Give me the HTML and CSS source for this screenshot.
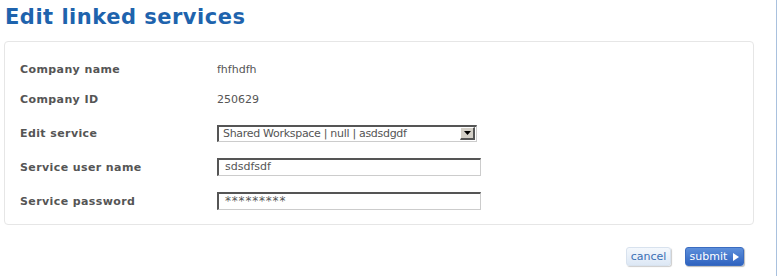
FILE: index.html
```html
<!DOCTYPE html>
<html>
<head>
<meta charset="utf-8">
<link rel="stylesheet" href="styles.css">
</head>
<body>
<div class="page">
  <h1 class="title">Edit linked services</h1>
  <div class="panel">
    <div class="row r1"><div class="label">Company name</div><div class="value">fhfhdfh</div></div>
    <div class="row r2"><div class="label">Company ID</div><div class="value">250629</div></div>
    <div class="row r3"><div class="label">Edit service</div>
      <div class="select"><span class="seltext">Shared Workspace | null | asdsdgdf</span><span class="selbtn"><svg width="7" height="4" viewBox="0 0 7 4"><path d="M0 0H7L3.5 4Z" fill="#000"/></svg></span></div>
    </div>
    <div class="row r4"><div class="label">Service user name</div><div class="input">sdsdfsdf</div></div>
    <div class="row r5"><div class="label">Service password</div><div class="input pw">*********</div></div>
  </div>
  <div class="actions">
    <span class="btn cancel">cancel</span>
    <span class="btn submit">submit <svg width="6" height="8" viewBox="0 0 6 8"><path d="M0 0L6 4L0 8Z" fill="#fff"/></svg></span>
  </div>
</div>
<div class="vline"></div>
</body>
</html>
```
FILE: styles.css
```css
html, body { margin: 0; padding: 0; background: #fff; }
body { font-family: "DejaVu Sans", Verdana, sans-serif; width: 778px; height: 276px; overflow: hidden; position: relative; }
.page { width: 776px; padding-left: 4px; box-sizing: border-box; }
.title { margin: 0; padding: 3px 0 0 1px; height: 41px; box-sizing: border-box; font-size: 21px; font-weight: bold; color: #1e63ad; line-height: 28px; letter-spacing: 0.5px; }
.panel { width: 750px; height: 184px; box-sizing: border-box; border: 1px solid #e6e6e6; border-radius: 4px; padding: 15px 0 0 15px; }
.row { display: flex; align-items: center; }
.r1 { height: 24px; }
.r2 { height: 36px; }
.r3 { height: 32px; }
.r4 { height: 36px; }
.r5 { height: 32px; }
.label { width: 197px; font-size: 11px; font-weight: bold; color: #555; letter-spacing: 0.4px; }
.value { font-size: 11px; color: #555; }
.select { width: 260px; height: 17px; box-sizing: border-box; border-top: 2px solid #555; border-left: 2px solid #555; border-right: 1px solid #ccc; border-bottom: 1px solid #ccc; display: flex; align-items: center; justify-content: space-between; font-size: 11px; color: #555; }
.seltext { padding-left: 4px; line-height: 14px; letter-spacing: -0.3px; }
.selbtn { width: 15px; height: 13px; box-sizing: border-box; background: #d4d0c8; border-top: 1px solid #fff; border-left: 1px solid #fff; border-right: 2px solid #555; border-bottom: 2px solid #555; display: flex; align-items: center; justify-content: center; margin-right: 1px; }
.input { width: 264px; height: 18px; box-sizing: border-box; border-top: 2px solid #555; border-left: 2px solid #555; border-right: 1px solid #ccc; border-bottom: 1px solid #ccc; font-size: 11px; color: #555; padding-left: 6px; line-height: 14px; }
.pw { letter-spacing: 0.8px; font-size: 12px; }
.actions { width: 740px; display: flex; justify-content: flex-end; gap: 14px; padding-top: 22px; }
.btn { height: 19px; box-sizing: border-box; border-radius: 3px; font-size: 11px; line-height: 16px; display: inline-flex; align-items: center; gap: 6px; }
.cancel { width: 45px; justify-content: center; color: #3a6fb5; background: linear-gradient(#f4f8fd, #dde8f5); border: 1px solid #d8e2ee; box-shadow: 1px 1px 1px #ccc; }
.submit { width: 59px; justify-content: center; color: #fff; background: linear-gradient(#5d8fdb, #2f63c0); border: 1px solid #3b6cc0; box-shadow: 1px 1px 1px #bbb; }
.vline { position: absolute; left: 776px; top: 0; width: 1px; height: 276px; background: #a9c1de; }
```
